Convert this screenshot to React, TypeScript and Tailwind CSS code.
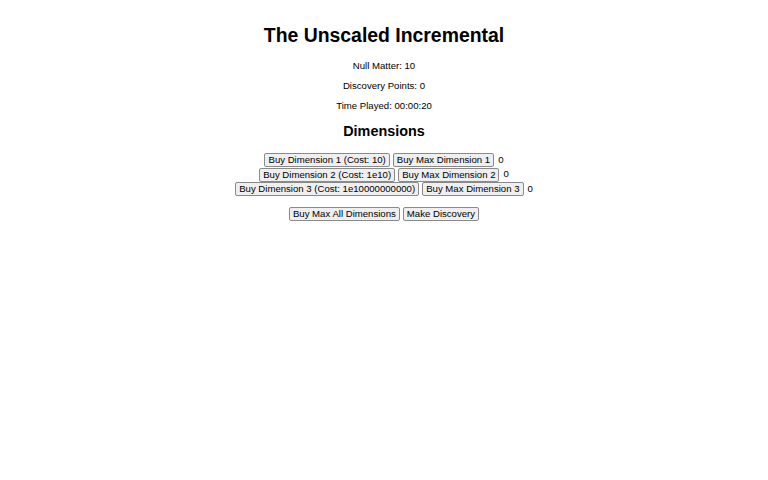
import { useState } from "react";

type Dimension = {
  id: number;
  cost: string;
  amount: number;
};

const dimensions: Dimension[] = [
  { id: 1, cost: "10", amount: 0 },
  { id: 2, cost: "1e10", amount: 0 },
  { id: 3, cost: "1e10000000000", amount: 0 },
];

function GameButton({ children }: { children: React.ReactNode }) {
  return (
    <button className="h-[14px] px-[3px] leading-[12px] text-[9.6px] bg-[#efefef] border border-[#8a8a8a] rounded-[2px] text-black whitespace-nowrap">
      {children}
    </button>
  );
}

export default function App() {
  const [nullMatter] = useState(10);
  const [discoveryPoints] = useState(0);

  return (
    <div
      className="w-[768px] h-[480px] bg-white text-black flex flex-col items-center"
      style={{ fontFamily: '"Liberation Sans", Arial, sans-serif' }}
    >
      <h1 className="mt-[24px] text-[19.4px] leading-[22px] font-bold">
        The Unscaled Incremental
      </h1>
      <div className="mt-[14px] flex flex-col items-center gap-[9px] text-[9.6px] leading-[11px]">
        <p>Null Matter: {nullMatter}</p>
        <p>Discovery Points: {discoveryPoints}</p>
        <p>Time Played: 00:00:20</p>
      </div>
      <h2 className="mt-[12px] text-[14.4px] leading-[17px] font-bold">Dimensions</h2>
      <div className="mt-[13px] flex flex-col items-center gap-[0.5px]">
        {dimensions.map((dim) => (
          <div key={dim.id} className="flex items-center gap-[3px] h-[14px]">
            <GameButton>
              Buy Dimension {dim.id} (Cost: {dim.cost})
            </GameButton>
            <GameButton>Buy Max Dimension {dim.id}</GameButton>
            <span className="ml-[1px] text-[9.6px]">{dim.amount}</span>
          </div>
        ))}
      </div>
      <div className="mt-[11px] flex items-center gap-[3px]">
        <GameButton>Buy Max All Dimensions</GameButton>
        <GameButton>Make Discovery</GameButton>
      </div>
    </div>
  );
}
